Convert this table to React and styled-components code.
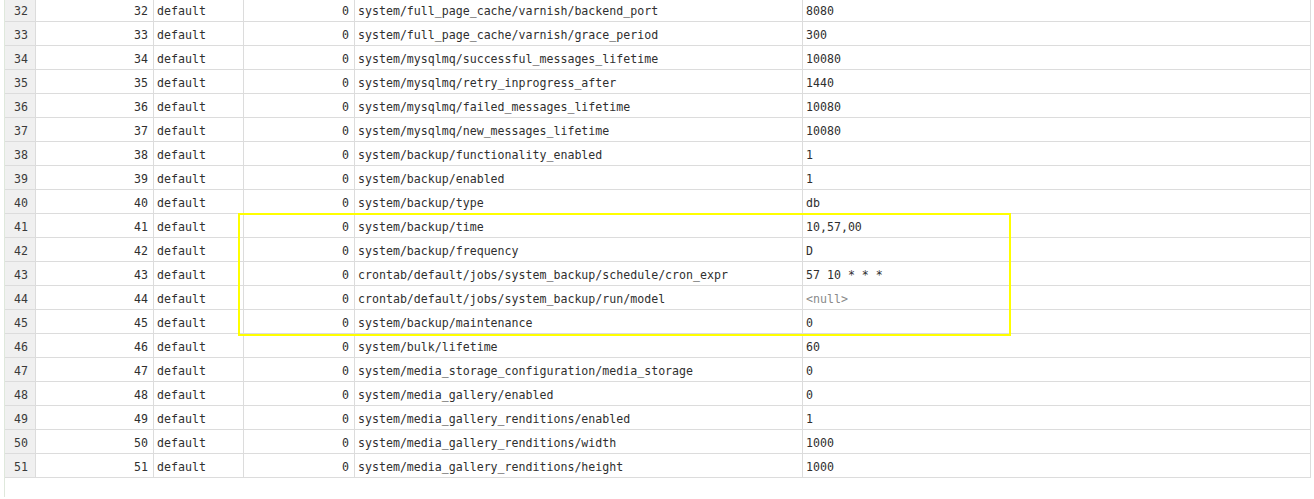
import React from 'react'
import styled, { createGlobalStyle } from 'styled-components';

const GlobalStyle = createGlobalStyle`
  html, body {
    margin: 0;
    padding: 0;
    background: #ffffff;
  }
  body {
    font-family: "DejaVu Sans Mono", "Liberation Mono", monospace;
    font-size: 11.6px;
    color: #2f2f2f;
  }
`;

const Page = styled.div`
  min-height: 100vh;
  padding-left: 4px;
  overflow: hidden;
`;

const Gutter = styled.div`
  min-height: 100vh;
  border-left: 1px solid #dfe8dc;
`;

const Grid = styled.div`
  position: relative;
  margin-top: -2px;
  display: grid;
  grid-template-columns: 31px 118px 90px 111px 448px 508px;
  grid-auto-rows: 24px;
  width: 1306px;
`;

const Cell = styled.div`
  box-sizing: border-box;
  border-right: 1px solid #dcdcdc;
  border-bottom: 1px solid #dcdcdc;
  display: flex;
  align-items: center;
  justify-content: ${p => (p.$right ? 'flex-end' : p.$center ? 'center' : 'flex-start')};
  padding: ${p => (p.$right ? '2px 5px 0 0' : p.$center ? '2px 0 0 2px' : '2px 0 0 3px')};
  white-space: nowrap;
  overflow: hidden;
  color: ${p => (p.$muted ? '#8a8a8a' : '#2f2f2f')};
`;

const RowNum = styled(Cell)`
  background: #f0f0f0;
  color: #3a3a3a;
`;

const Highlight = styled.div`
  position: absolute;
  box-sizing: border-box;
  left: 233px;
  top: 215px;
  width: 773px;
  height: 123px;
  border: 2px solid #ffff00;
  pointer-events: none;
`;

const rows = [
  ['system/full_page_cache/varnish/backend_port', '8080'],
  ['system/full_page_cache/varnish/grace_period', '300'],
  ['system/mysqlmq/successful_messages_lifetime', '10080'],
  ['system/mysqlmq/retry_inprogress_after', '1440'],
  ['system/mysqlmq/failed_messages_lifetime', '10080'],
  ['system/mysqlmq/new_messages_lifetime', '10080'],
  ['system/backup/functionality_enabled', '1'],
  ['system/backup/enabled', '1'],
  ['system/backup/type', 'db'],
  ['system/backup/time', '10,57,00'],
  ['system/backup/frequency', 'D'],
  ['crontab/default/jobs/system_backup/schedule/cron_expr', '57 10 * * *'],
  ['crontab/default/jobs/system_backup/run/model', null],
  ['system/backup/maintenance', '0'],
  ['system/bulk/lifetime', '60'],
  ['system/media_storage_configuration/media_storage', '0'],
  ['system/media_gallery/enabled', '0'],
  ['system/media_gallery_renditions/enabled', '1'],
  ['system/media_gallery_renditions/width', '1000'],
  ['system/media_gallery_renditions/height', '1000'],
];

function App() {
  return (
    <Page>
      <GlobalStyle />
      <Gutter>
        <Grid>
          {rows.map(([path, value], i) => {
            const n = 32 + i;
            return (
              <React.Fragment key={n}>
                <RowNum $center>{n}</RowNum>
                <Cell $right>{n}</Cell>
                <Cell>default</Cell>
                <Cell $right>0</Cell>
                <Cell>{path}</Cell>
                <Cell $muted={value === null}>{value === null ? '<null>' : value}</Cell>
              </React.Fragment>
            );
          })}
          <Highlight />
        </Grid>
      </Gutter>
    </Page>
  );
}

export default App;
